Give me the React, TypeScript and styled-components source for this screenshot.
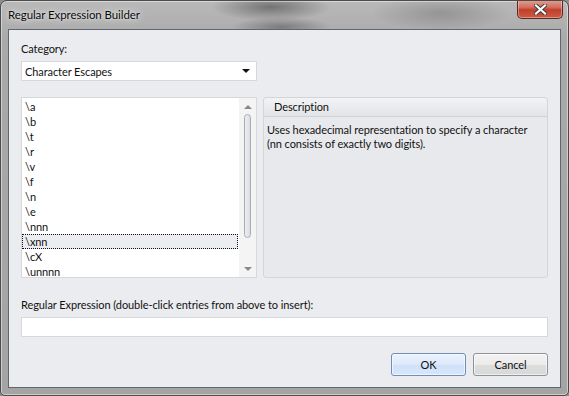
import React from "react";
import styled, { createGlobalStyle } from "styled-components";

// ─── Global ───────────────────────────────────────────────────────────────────
const GlobalStyle = createGlobalStyle`
  html, body {
    margin: 0;
    padding: 0;
    background: #8d8d8d;
  }
  * { box-sizing: border-box; }
`;

const FONT = `Lato, "Liberation Sans", Arial, sans-serif`;

// ─── Window frame ─────────────────────────────────────────────────────────────
const Window = styled.div`
  width: 569px;
  height: 396px;
  display: flex;
  flex-direction: column;
  padding: 0 7px 7px 7px;
  border: 1px solid #4c4c4c;
  border-radius: 7px 7px 5px 5px;
  background:
    radial-gradient(ellipse 60px 14px at 270px 6px, rgba(60,60,60,0.55), transparent),
    radial-gradient(ellipse 50px 10px at 280px 26px, rgba(60,60,60,0.45), transparent),
    radial-gradient(ellipse 70px 18px at 440px 12px, rgba(90,90,90,0.35), transparent),
    linear-gradient(to bottom, #b9b9b9 0%, #a9a9a9 40px, #a4a4a4 100%);
  box-shadow: inset 0 0 0 1px rgba(255,255,255,0.45);
  font-family: ${FONT};
  letter-spacing: -0.08px;
  overflow: hidden;
`;

const TitleBar = styled.div`
  height: 28px;
  display: flex;
  align-items: flex-start;
  justify-content: space-between;
`;

const Title = styled.div`
  padding-top: 7px;
  font-size: 11.5px;
  color: #0a0a0a;
  text-shadow: 0 0 8px rgba(255,255,255,0.9), 0 0 3px rgba(255,255,255,0.8);
`;

const CloseButton = styled.div`
  width: 46px;
  height: 19px;
  margin-top: -1px;
  margin-right: -2px;
  border: 1px solid #5a2a24;
  border-top: none;
  border-radius: 0 0 5px 5px;
  background: linear-gradient(to bottom, #e5a093 0%, #d0705f 40%, #c0402b 55%, #cf5a42 100%);
  box-shadow: inset 0 0 0 1px rgba(255,255,255,0.35);
  display: flex;
  align-items: center;
  justify-content: center;
`;

// ─── Client area ──────────────────────────────────────────────────────────────
const Client = styled.div`
  flex: 1;
  display: flex;
  flex-direction: column;
  background: #ebecef;
  border: 1px solid #5f6670;
  padding: 11px 12px 0 12px;
  color: #111;
  font-size: 11px;
`;

const Label = styled.div`
  height: 15px;
  line-height: 15px;
  margin-bottom: 5px;
`;

const SelectBox = styled.div`
  width: 236px;
  height: 20px;
  background: #fff;
  border: 1px solid #d6d8dc;
  display: flex;
  align-items: center;
  justify-content: space-between;
  padding: 0 6px 0 3px;
`;

const DownArrow = styled.div<{ color?: string }>`
  width: 0;
  height: 0;
  border-left: 4px solid transparent;
  border-right: 4px solid transparent;
  border-top: 4px solid ${(p) => p.color || "#111"};
`;

const UpArrow = styled.div`
  width: 0;
  height: 0;
  border-left: 4px solid transparent;
  border-right: 4px solid transparent;
  border-bottom: 4px solid #8a8a8a;
`;

const MiddleRow = styled.div`
  display: flex;
  gap: 6px;
  margin-top: 16px;
  height: 181px;
`;

// ─── List box ─────────────────────────────────────────────────────────────────
const ListBox = styled.div`
  width: 236px;
  height: 100%;
  background: #fff;
  border: 1px solid #d6d8dc;
  display: flex;
  overflow: hidden;
`;

const Items = styled.div`
  flex: 1;
  padding-top: 1px;
  overflow: hidden;
`;

const Item = styled.div<{ selected?: boolean }>`
  height: 15px;
  line-height: 13px;
  white-space: nowrap;
  border: 1px dotted ${(p) => (p.selected ? "#111" : "transparent")};
  background: ${(p) => (p.selected ? "#ecedf0" : "transparent")};
  margin-right: 1px;
  padding-left: 2px;
  overflow: hidden;
`;

const ScrollBar = styled.div`
  width: 17px;
  background: #f4f4f5;
  display: flex;
  flex-direction: column;
  align-items: center;
  padding: 7px 0 6px 0;
`;

const ScrollThumb = styled.div`
  width: 7px;
  margin: 5px 0 29px 0;
  flex: 1;
  border: 1px solid #a8acb2;
  border-radius: 4px;
  background: linear-gradient(to right, #eceef1, #dcdee2);
`;

// ─── Description panel ────────────────────────────────────────────────────────
const DescPanel = styled.div`
  flex: 1;
  height: 100%;
  border: 1px solid #d3d5d9;
  border-radius: 3px;
  background: #e8e9ec;
  display: flex;
  flex-direction: column;
`;

const DescHeader = styled.div`
  height: 19px;
  line-height: 18px;
  padding-left: 10px;
  background: linear-gradient(to bottom, #f2f3f5, #e3e4e7);
  border-bottom: 1px solid #d0d2d6;
  border-radius: 3px 3px 0 0;
`;

const DescBody = styled.div`
  padding: 6px 2px 0 3px;
  line-height: 14px;
  white-space: nowrap;
`;

// ─── Bottom ───────────────────────────────────────────────────────────────────
const ExprLabel = styled(Label)`
  margin-top: 19px;
  margin-bottom: 5px;
`;

const TextInput = styled.div`
  height: 20px;
  background: #fff;
  border: 1px solid #d6d8dc;
`;

const ButtonRow = styled.div`
  display: flex;
  justify-content: flex-end;
  gap: 7px;
  margin-top: 16px;
`;

const Button = styled.div<{ primary?: boolean }>`
  width: 75px;
  height: 23px;
  border-radius: 3px;
  border: 1px solid ${(p) => (p.primary ? "#6f8db8" : "#8e9299")};
  background: ${(p) =>
    p.primary
      ? "linear-gradient(to bottom, #eaf2fd 0%, #dde9fb 50%, #cfe0f8 51%, #d7e6fa 100%)"
      : "linear-gradient(to bottom, #f3f3f3 0%, #ebebeb 50%, #dddddd 51%, #d8d8d8 100%)"};
  box-shadow: inset 0 0 0 1px rgba(255,255,255,0.6);
  display: flex;
  align-items: center;
  justify-content: center;
  color: #111;
`;

const entries = [
  "\\a", "\\b", "\\t", "\\r", "\\v", "\\f", "\\n", "\\e",
  "\\nnn", "\\xnn", "\\cX", "\\unnnn",
];

export default function App() {
  return (
    <>
      <GlobalStyle />
      <Window>
        <TitleBar>
          <Title>Regular Expression Builder</Title>
          <CloseButton>
            <svg width="13" height="11" viewBox="0 0 13 11">
              <path
                d="M2 1.5 L11 9.5 M11 1.5 L2 9.5"
                stroke="#3a3a3a"
                strokeWidth="4"
                strokeLinecap="square"
              />
              <path
                d="M2 1.5 L11 9.5 M11 1.5 L2 9.5"
                stroke="#fff"
                strokeWidth="2.2"
                strokeLinecap="square"
              />
            </svg>
          </CloseButton>
        </TitleBar>
        <Client>
          <Label>Category:</Label>
          <SelectBox>
            <span>Character Escapes</span>
            <DownArrow />
          </SelectBox>

          <MiddleRow>
            <ListBox>
              <Items>
                {entries.map((e) => (
                  <Item key={e} selected={e === "\\xnn"}>
                    {e}
                  </Item>
                ))}
              </Items>
              <ScrollBar>
                <UpArrow />
                <ScrollThumb />
                <DownArrow color="#8a8a8a" />
              </ScrollBar>
            </ListBox>
            <DescPanel>
              <DescHeader>Description</DescHeader>
              <DescBody>
                Uses hexadecimal representation to specify a character
                <br />
                (nn consists of exactly two digits).
              </DescBody>
            </DescPanel>
          </MiddleRow>

          <ExprLabel>Regular Expression (double-click entries from above to insert):</ExprLabel>
          <TextInput />

          <ButtonRow>
            <Button primary>OK</Button>
            <Button>Cancel</Button>
          </ButtonRow>
        </Client>
      </Window>
    </>
  );
}
